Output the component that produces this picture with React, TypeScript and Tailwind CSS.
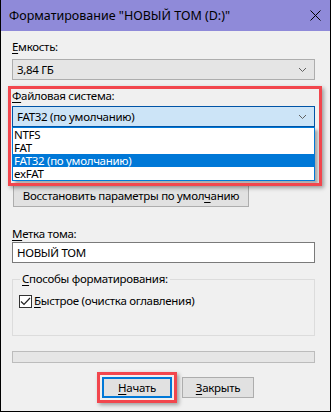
import React from "react";

const font = { fontFamily: '"Noto Sans", "Open Sans", Arial, sans-serif' };

function Chevron() {
  return (
    <svg width="9" height="6" viewBox="0 0 9 6" className="shrink-0">
      <path d="M1 1 L4.5 4.5 L8 1" fill="none" stroke="#606060" strokeWidth="1" />
    </svg>
  );
}

function U({ children }: { children: React.ReactNode }) {
  return <span className="underline underline-offset-2">{children}</span>;
}

export default function App() {
  const options = ["NTFS", "FAT", "FAT32 (по умолчанию)", "exFAT"];

  return (
    <div
      className="w-[331px] h-[412px] bg-[#f0f0f0] border-x border-b border-black text-[11.5px] tracking-[-0.3px] leading-4 text-black overflow-hidden whitespace-nowrap"
      style={font}
    >
      {/* заголовок окна */}
      <div className="h-[31px] bg-[#8f8ad9] flex items-center justify-between pl-[8px] pr-[9px]">
        <span className="text-[12.5px] tracking-normal">Форматирование "НОВЫЙ ТОМ (D:)"</span>
        <svg width="11" height="11" viewBox="0 0 11 11">
          <path d="M0.5 0.5 L10.5 10.5 M10.5 0.5 L0.5 10.5" stroke="#000" strokeWidth="1" />
        </svg>
      </div>

      <div className="px-[11px] pt-[8px] pr-[15px]">
        <div>
          <U>Е</U>мкость:
        </div>
        <div className="mt-[4px] h-[21px] bg-[#e5e5e5] border border-[#adadad] flex items-center justify-between pl-[4px] pr-[7px]">
          <span>3,84 ГБ</span>
          <Chevron />
        </div>

        {/* файловая система */}
        <div className="relative mt-[8px]">
          <div>
            <U>Ф</U>айловая система:
          </div>
          <div className="mt-[2px] h-[21px] bg-[#cce4f7] border border-[#0054a6] flex items-center justify-between pl-[4px] pr-[7px]">
            <span>FAT32 (по умолчанию)</span>
            <Chevron />
          </div>

          <div className="absolute left-0 right-0 top-[39px] z-20 bg-white border border-[#0078d7] shadow-[3px_3px_3px_rgba(0,0,0,0.3)]">
            {options.map((o, i) => (
              <div
                key={o}
                className={
                  "h-[13px] leading-[13px] pl-[1px] " +
                  (i === 2 ? "bg-[#0078d7] text-white" : "")
                }
              >
                {o}
              </div>
            ))}
          </div>

          <div className="absolute -left-[4px] -right-[7px] -top-[2px] h-[100px] z-30 border-[3px] border-[#f2464d] shadow-[2px_2px_4px_rgba(0,0,0,0.35)] pointer-events-none" />

          <button className="mt-[57px] ml-[1px] w-[236px] h-[23px] bg-[#e1e1e1] border border-[#adadad] text-center">
            Восстановить параметры по умол<U>ч</U>анию
          </button>
        </div>

        <div className="mt-[19px]">
          <U>М</U>етка тома:
        </div>
        <div className="h-[21px] bg-white border border-[#7a7a7a] flex items-center pl-[4px]">
          НОВЫЙ ТОМ
        </div>

        <fieldset className="mt-[8px] border border-[#dcdcdc] h-[65px] px-[6px]">
          <legend className="ml-[1px] px-[2px]">
            <U>С</U>пособы форматирования:
          </legend>
          <label className="flex items-center gap-[2px] mt-[6px]">
            <span className="w-[13px] h-[13px] bg-white border border-[#333] flex items-center justify-center">
              <svg width="11" height="9" viewBox="0 0 11 9">
                <path d="M1 4.5 L4 7.5 L10 1" fill="none" stroke="#222" strokeWidth="1.2" />
              </svg>
            </span>
            <span>
              <U>Б</U>ыстрое (очистка оглавления)
            </span>
          </label>
        </fieldset>

        <div className="mt-[15px] h-[12px] bg-[#e6e6e6] border border-[#bcbcbc]" />

        <div className="flex items-center mt-[9px] pl-[85px]">
          <div className="border-[3px] border-[#f2464d] p-[2px] shadow-[2px_2px_4px_rgba(0,0,0,0.35)]">
            <button className="w-[70px] h-[21px] bg-[#e1e1e1] border-2 border-[#0078d7] flex items-center justify-center">
              <span>
                <U>Н</U>ачать
              </span>
            </button>
          </div>
          <button className="ml-[5px] w-[72px] h-[21px] bg-[#e1e1e1] border border-[#adadad] flex items-center justify-center">
            <span>
              <U>З</U>акрыть
            </span>
          </button>
        </div>
      </div>
    </div>
  );
}
